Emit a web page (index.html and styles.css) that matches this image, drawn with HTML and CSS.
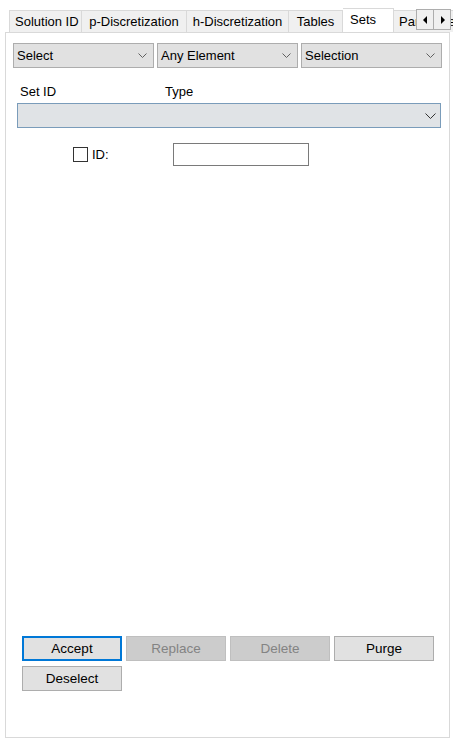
FILE: index.html
```html
<!DOCTYPE html>
<html lang="en">
<head>
    <meta charset="UTF-8">
    <title>Sets</title>
    <link rel="stylesheet" href="styles.css">
</head>
<body>
    <div class="tabstrip">
        <div class="tabs">
            <div class="tab t-sol">Solution ID</div>
            <div class="tab t-p">p-Discretization</div>
            <div class="tab t-h">h-Discretization</div>
            <div class="tab t-tab">Tables</div>
            <div class="tab t-sets active">Sets</div>
            <div class="tab">Parameters</div>
        </div>
        <div class="scroller">
            <span class="arrow"><svg width="5" height="8" viewBox="0 0 5 8"><path d="M4 0V8L0 4Z" fill="#000"/></svg></span>
            <span class="arrow"><svg width="5" height="8" viewBox="0 0 5 8"><path d="M1 0V8L5 4Z" fill="#000"/></svg></span>
        </div>
    </div>

    <div class="panel">
        <div class="combos">
            <div class="combo"><span>Select</span><svg class="chev" width="9" height="5" viewBox="0 0 9 5"><path d="M0.5 0.5L4.5 4.5L8.5 0.5" stroke="#606060" fill="none"/></svg></div>
            <div class="combo"><span>Any Element</span><svg class="chev" width="9" height="5" viewBox="0 0 9 5"><path d="M0.5 0.5L4.5 4.5L8.5 0.5" stroke="#606060" fill="none"/></svg></div>
            <div class="combo"><span>Selection</span><svg class="chev" width="9" height="5" viewBox="0 0 9 5"><path d="M0.5 0.5L4.5 4.5L8.5 0.5" stroke="#606060" fill="none"/></svg></div>
        </div>

        <div class="headers">
            <span class="col-id">Set ID</span>
            <span>Type</span>
        </div>
        <div class="setlist">
            <svg class="chev" width="11" height="6" viewBox="0 0 11 6"><path d="M0.5 0.5L5.5 5.5L10.5 0.5" stroke="#333" fill="none"/></svg>
        </div>

        <div class="idrow">
            <label class="check"><span class="box"></span>ID:</label>
            <div class="textbox"></div>
        </div>

        <div class="actions">
            <div class="btn-row">
                <button class="btn focus">Accept</button>
                <button class="btn" disabled>Replace</button>
                <button class="btn" disabled>Delete</button>
                <button class="btn">Purge</button>
            </div>
            <div class="btn-row">
                <button class="btn">Deselect</button>
            </div>
        </div>
    </div>
</body>
</html>
```

FILE: styles.css
```css
body {
    margin: 0;
    background: #fff;
    font-family: "Liberation Sans", Arial, sans-serif;
    font-size: 13px;
    color: #000;
    width: 453px;
    height: 742px;
    overflow: hidden;
}

.tabstrip {
    position: relative;
    height: 32px;
    padding-left: 9px;
    box-sizing: border-box;
    overflow: hidden;
}

.tabs {
    display: flex;
    padding-top: 10px;
    height: 22px;
}

.tab {
    flex: none;
    box-sizing: border-box;
    height: 22px;
    line-height: 21px;
    padding: 0 5px;
    background: #f0f0f0;
    border: 1px solid #d9d9d9;
    border-bottom: none;
    border-left: none;
    white-space: nowrap;
    text-align: center;
}

.tab:first-child {
    border-left: 1px solid #d9d9d9;
}

.t-sol { width: 73px; }
.t-p { width: 105px; }
.t-h { width: 102px; }
.t-tab { width: 54px; }
.t-sets { width: 51px; }

.tab.active {
    background: #fff;
    margin-top: -2px;
    height: 25px;
    line-height: 21px;
    text-align: left;
    padding-left: 7px;
    position: relative;
    z-index: 1;
}

.scroller {
    position: absolute;
    top: 9px;
    left: 416px;
    display: flex;
    z-index: 2;
}

.arrow {
    width: 16px;
    height: 19px;
    background: #f0f0f0;
    border: 1px solid #adadad;
    display: flex;
    align-items: center;
    justify-content: center;
}

.arrow + .arrow {
    border-left: none;
}

.panel {
    margin-left: 5px;
    width: 445px;
    height: 706px;
    box-sizing: border-box;
    border: 1px solid #d9d9d9;
    padding: 10px 7px 0 7px;
}

.combos {
    display: flex;
    gap: 3px;
}

.combo {
    flex: 1;
    height: 25px;
    box-sizing: border-box;
    background: #e1e1e1;
    border: 1px solid #adadad;
    display: flex;
    align-items: center;
    justify-content: space-between;
    padding: 0 6px 0 3px;
}

.headers {
    display: flex;
    margin: 16px 0 0 7px;
    height: 20px;
}

.col-id {
    width: 145px;
}

.setlist {
    margin: -1px 1px 0 4px;
    height: 25px;
    box-sizing: border-box;
    background: #e0e3e6;
    border: 1px solid #7a9cba;
    display: flex;
    align-items: center;
    justify-content: flex-end;
    padding-right: 4px;
}

.idrow {
    display: flex;
    align-items: center;
    margin-top: 15px;
    padding-left: 60px;
}

.check {
    display: flex;
    align-items: center;
    width: 100px;
}

.box {
    width: 15px;
    height: 15px;
    box-sizing: border-box;
    border: 1px solid #333;
    margin-right: 4px;
}

.textbox {
    width: 136px;
    height: 23px;
    box-sizing: border-box;
    border: 1px solid #7a7a7a;
    background: #fff;
}

.actions {
    margin: 470px 0 0 9px;
    display: flex;
    flex-direction: column;
    gap: 5px;
}

.btn-row {
    display: flex;
    gap: 4px;
}

.btn {
    width: 100px;
    height: 25px;
    box-sizing: border-box;
    background: #e1e1e1;
    border: 1px solid #adadad;
    font-family: "Liberation Sans", Arial, sans-serif;
    font-size: 13.5px;
    color: #000;
    padding: 0;
}

.btn.focus {
    border: 2px solid #0078d7;
}

.btn:disabled {
    background: #cccccc;
    border-color: #bfbfbf;
    color: #838383;
}
```
